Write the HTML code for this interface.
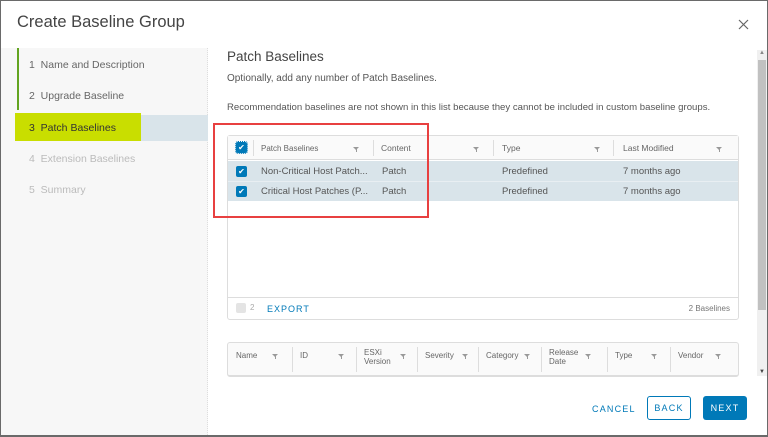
<!DOCTYPE html>
<html><head><meta charset="utf-8"><style>
*{box-sizing:border-box;margin:0;padding:0}
body{width:768px;height:437px;overflow:hidden;background:#fff;font-family:"Liberation Sans",sans-serif;color:#565656;position:relative}
.frame{position:absolute;left:0;top:0;width:768px;height:437px;border:1px solid #6a6a6a;border-bottom:2px solid #6a6a6a;z-index:5;pointer-events:none}
.abs{position:absolute}
.title{left:17px;top:13px;font-size:16.5px;color:#444}
.side{left:1px;top:48px;width:207px;height:387px;background:#f7f7f7;border-right:1px dotted #ddd}
.step{position:absolute;left:29px;font-size:10.5px;color:#666}
.grid{position:absolute;border:1px solid #ddd;border-radius:3px;background:#fff}
.hd{position:absolute;font-size:8px;color:#666}
.cell{position:absolute;font-size:9.5px;color:#555}
.cb{position:absolute;width:11px;height:11px;background:#0079b8;border-radius:2px;color:#fff;font-size:8px;line-height:11px;text-align:center}
.filt{position:absolute;width:6px;height:6px}
.filt:before{content:"";position:absolute;left:0;top:1px;border-left:3px solid transparent;border-right:3px solid transparent;border-top:3px solid #999}
.filt:after{content:"";position:absolute;left:2.5px;top:3px;width:1px;height:3px;background:#999}
.sep{position:absolute;width:1px;background:#ddd}
</style></head><body>
<div class="frame"></div>
<div class="abs title">Create Baseline Group</div>
<svg class="abs" style="left:738px;top:19px" width="11" height="11" viewBox="0 0 11 11"><path d="M1 1L10 10M10 1L1 10" stroke="#666" stroke-width="1.2"/></svg>
<div class="abs side"></div>
<div class="abs" style="left:17px;top:48px;width:2px;height:62px;background:#62a420"></div>
<div class="abs" style="left:17px;top:115px;width:191px;height:26px;background:#d9e4ea"></div>
<div class="abs" style="left:15px;top:113px;width:126px;height:28px;background:#c9de00"></div>
<div class="step" style="top:59px">1&nbsp;&nbsp;Name and Description</div>
<div class="step" style="top:90px">2&nbsp;&nbsp;Upgrade Baseline</div>
<div class="step" style="top:122px;color:#333">3&nbsp;&nbsp;Patch Baselines</div>
<div class="step" style="top:153px;color:#bbb">4&nbsp;&nbsp;Extension Baselines</div>
<div class="step" style="top:184px;color:#bbb">5&nbsp;&nbsp;Summary</div>

<div class="abs" style="left:227px;top:49px;font-size:13.5px;color:#444">Patch Baselines</div>
<div class="abs" style="left:227px;top:73px;font-size:10px">Optionally, add any number of Patch Baselines.</div>
<div class="abs" style="left:227px;top:102px;font-size:9.6px">Recommendation baselines are not shown in this list because they cannot be included in custom baseline groups.</div>

<div class="abs" style="left:757px;top:50px;width:10px;height:326px;background:#f0f0f0"></div>
<div class="abs" style="left:758px;top:60px;width:8px;height:250px;background:#c1c1c1"></div>
<div class="abs" style="left:759px;top:50px;font-size:6px;color:#888">▲</div>
<div class="abs" style="left:759px;top:369px;font-size:6px;color:#444">▼</div>

<div class="grid" style="left:227px;top:135px;width:512px;height:185px">
  <div class="abs" style="left:0;top:0;width:510px;height:24px;background:#fafafa;border-bottom:1px solid #ddd"></div>
  <div class="cb" style="left:8px;top:6px;outline:1px dotted #0079b8">✔</div>
  <div class="sep" style="left:25px;top:4px;height:16px"></div>
  <div class="hd" style="left:33px;top:8px">Patch Baselines</div><div class="filt" style="left:125px;top:10px"></div>
  <div class="sep" style="left:145px;top:4px;height:16px"></div>
  <div class="hd" style="left:153px;top:7px;font-size:8.5px">Content</div><div class="filt" style="left:245px;top:10px"></div>
  <div class="sep" style="left:265px;top:4px;height:16px"></div>
  <div class="hd" style="left:274px;top:7px;font-size:8.5px">Type</div><div class="filt" style="left:366px;top:10px"></div>
  <div class="sep" style="left:385px;top:4px;height:16px"></div>
  <div class="hd" style="left:395px;top:7px;font-size:8.5px">Last Modified</div><div class="filt" style="left:488px;top:10px"></div>
  <div class="abs" style="left:0;top:25px;width:510px;height:40px;background:#d9e4ea"></div>
  <div class="abs" style="left:0;top:45px;width:510px;height:1px;background:#e8eef2"></div>
  <div class="cb" style="left:8px;top:30px">✔</div>
  <div class="cell" style="left:33px;top:30px">Non-Critical Host Patch...</div>
  <div class="cell" style="left:154px;top:30px">Patch</div>
  <div class="cell" style="left:274px;top:30px">Predefined</div>
  <div class="cell" style="left:395px;top:30px">7 months ago</div>
  <div class="cb" style="left:8px;top:50px">✔</div>
  <div class="cell" style="left:33px;top:50px">Critical Host Patches (P...</div>
  <div class="cell" style="left:154px;top:50px">Patch</div>
  <div class="cell" style="left:274px;top:50px">Predefined</div>
  <div class="cell" style="left:395px;top:50px">7 months ago</div>
  <div class="abs" style="left:0;top:161px;width:510px;height:1px;background:#ddd"></div>
  <div class="abs" style="left:8px;top:167px;width:10px;height:10px;background:#e4e4e4;border-radius:2px"></div>
  <div class="abs" style="left:22px;top:167px;font-size:8px;color:#aaa">2</div>
  <div class="abs" style="left:39px;top:168px;font-size:9px;color:#0079b8;letter-spacing:1px">EXPORT</div>
  <div class="abs" style="right:8px;top:168px;font-size:8px;color:#777">2 Baselines</div>
</div>
<div class="abs" style="left:213px;top:123px;width:216px;height:95px;border:2px solid #e84040"></div>

<div class="grid" style="left:227px;top:342px;width:512px;height:35px;background:#fafafa;border-bottom:2px solid #ddd">
  <div class="hd" style="left:8px;top:8px">Name</div><div class="filt" style="left:44px;top:10px"></div>
  <div class="sep" style="left:64px;top:4px;height:25px"></div>
  <div class="hd" style="left:72px;top:8px">ID</div><div class="filt" style="left:110px;top:10px"></div>
  <div class="sep" style="left:128px;top:4px;height:25px"></div>
  <div class="hd" style="left:136px;top:5px;line-height:9px">ESXi<br>Version</div><div class="filt" style="left:172px;top:10px"></div>
  <div class="sep" style="left:189px;top:4px;height:25px"></div>
  <div class="hd" style="left:197px;top:8px">Severity</div><div class="filt" style="left:234px;top:10px"></div>
  <div class="sep" style="left:250px;top:4px;height:25px"></div>
  <div class="hd" style="left:258px;top:8px">Category</div><div class="filt" style="left:296px;top:10px"></div>
  <div class="sep" style="left:313px;top:4px;height:25px"></div>
  <div class="hd" style="left:321px;top:5px;line-height:9px">Release<br>Date</div><div class="filt" style="left:357px;top:10px"></div>
  <div class="sep" style="left:379px;top:4px;height:25px"></div>
  <div class="hd" style="left:387px;top:8px">Type</div><div class="filt" style="left:423px;top:10px"></div>
  <div class="sep" style="left:442px;top:4px;height:25px"></div>
  <div class="hd" style="left:450px;top:8px">Vendor</div><div class="filt" style="left:487px;top:10px"></div>
</div>

<div class="abs" style="left:592px;top:404px;font-size:9px;color:#0079b8;letter-spacing:1.2px">CANCEL</div>
<div class="abs" style="left:647px;top:396px;width:44px;height:24px;border:1px solid #0079b8;border-radius:3px;font-size:9px;color:#0079b8;letter-spacing:1.2px;text-align:center;line-height:22px">BACK</div>
<div class="abs" style="left:703px;top:396px;width:44px;height:24px;background:#0079b8;border-radius:3px;font-size:9px;color:#fff;letter-spacing:1.2px;text-align:center;line-height:24px">NEXT</div>
</body></html>
